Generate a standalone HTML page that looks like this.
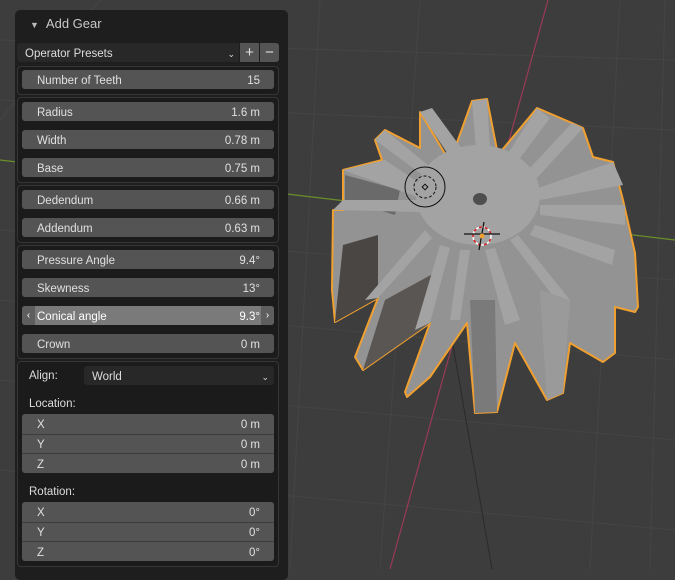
<!DOCTYPE html>
<html><head><meta charset="utf-8"><style>
*{margin:0;padding:0;box-sizing:border-box}
body{width:675px;height:569px;overflow:hidden;background:#3d3d3d;font-family:"Liberation Sans","DejaVu Sans",sans-serif;font-size:11.5px;color:#e0e0e0;position:relative}
svg.bg{position:absolute;left:0;top:0}
.panel{position:absolute;left:15px;top:10px;width:273px;height:570px;background:#1e1e1e;border-radius:5px}
.hdr{position:absolute;left:15px;top:6px;font-size:13px;color:#c8c8c8}
.hdr span{font-size:9px;margin-right:7px;color:#bbb}
.box{position:absolute;left:2px;width:262px;background:#1b1b1b;border:1px solid #363636;border-radius:4px}
.f{position:absolute;left:7px;width:252px;height:19px;background:#545454;border-radius:3px;line-height:19px}
.f .l{position:absolute;left:15px;top:2px}
.f .v{position:absolute;right:14px;top:2px}
.lab{position:absolute;left:14px;color:#ddd}
.dd{position:absolute;height:19px;background:#282828;line-height:19px;padding-left:8px;color:#ddd}
.dd b{font-weight:normal;position:relative;top:2px}
</style></head><body>
<svg class="bg" width="675" height="569" viewBox="0 0 675 569">
<g stroke="#454545" stroke-width="1" fill="none">
<line x1="0" y1="40" x2="675" y2="60"/>
<line x1="0" y1="100" x2="675" y2="130"/>
<line x1="0" y1="230" x2="675" y2="280"/>
<line x1="0" y1="300" x2="675" y2="360"/>
<line x1="0" y1="380" x2="675" y2="440"/>
<line x1="0" y1="470" x2="675" y2="530"/>
<line x1="320" y1="0" x2="290" y2="569"/>
<line x1="420" y1="0" x2="380" y2="569"/>
<line x1="620" y1="0" x2="590" y2="569"/>
<line x1="665" y1="0" x2="650" y2="569"/>
<line x1="100" y1="0" x2="0" y2="120"/>
</g>
<line x1="0" y1="160" x2="675" y2="240" stroke="#6a8f2a" stroke-width="1.2"/>
<line x1="548" y1="0" x2="390" y2="569" stroke="#9a3a55" stroke-width="1.2"/>
<line x1="425" y1="185" x2="492" y2="569" stroke="#2a2a2a" stroke-width="1"/>
<polygon points="420,112 450,162 472,101 487,99 498,155 537,108 572,123 583,128 593,157 613,162 623,200 635,253 638,307 635,312 615,307 615,353 603,362 570,343 563,393 547,400 515,343 497,412 475,413 467,323 430,377 407,397 405,392 430,323 363,370 355,357 378,298 335,322 332,290 333,210 343,210 343,170 382,160 375,140 385,130 420,148" fill="#939393" stroke="#f0a030" stroke-width="2" stroke-linejoin="round"/>
<polygon points="343,245 378,235 378,298 335,322" fill="#4a4644"/>
<polygon points="385,300 440,270 430,323 363,370" fill="#5a5654"/>
<polygon points="345,175 400,190 395,215 345,200" fill="#6a6a6a"/>
<g fill="#a3a3a3">
<ellipse cx="478" cy="195" rx="62" ry="50"/>
<polygon points="420,112 432,108 470,160 455,165"/>
<polygon points="472,101 487,99 490,150 476,150"/>
<polygon points="537,108 550,118 515,165 505,158"/>
<polygon points="572,123 583,128 535,180 528,170"/>
<polygon points="613,162 623,185 540,200 538,188"/>
<polygon points="625,205 625,225 540,215 540,205"/>
<polygon points="615,250 612,265 530,235 535,225"/>
<polygon points="570,300 560,305 510,240 518,235"/>
<polygon points="520,320 505,325 485,250 495,248"/>
<polygon points="460,320 450,320 460,250 470,250"/>
<polygon points="430,323 415,330 440,245 450,248"/>
<polygon points="378,298 365,300 425,230 432,238"/>
<polygon points="333,210 343,200 420,200 420,212"/>
<polygon points="343,170 385,160 430,190 420,198"/>
<polygon points="375,140 385,130 440,175 432,182"/>
</g>
<polygon points="470,300 495,300 497,412 475,413" fill="#7a7a7a"/>
<polygon points="540,290 570,300 563,393 547,400" fill="#9a9a9a"/>
<ellipse cx="480" cy="199" rx="7" ry="6" fill="#4e4e4e"/>
<circle cx="425" cy="187" r="20" fill="none" stroke="#111" stroke-width="1"/>
<circle cx="425" cy="187" r="11" fill="none" stroke="#111" stroke-width="1" stroke-dasharray="3,2"/>
<rect x="423" y="185" width="4" height="4" fill="none" stroke="#111" transform="rotate(45 425 187)"/>
<circle cx="482" cy="236" r="9" fill="none" stroke="#fff" stroke-width="1.5" stroke-dasharray="3,3"/>
<circle cx="482" cy="236" r="9" fill="none" stroke="#d22" stroke-width="1.5" stroke-dasharray="3,3" stroke-dashoffset="3"/>
<path d="M464 234 H500 M484 222 L479 250" stroke="#111" stroke-width="1.2"/>
<circle cx="482" cy="236" r="2.5" fill="#f0a030"/>
</svg>
<div class="panel">
<div class="hdr"><span>▼</span>Add Gear</div>
<div class="dd" style="left:2px;top:33px;width:222px;border-radius:3px 0 0 3px"><b>Operator Presets</b><span style="position:absolute;right:4px;font-size:9px;top:2px">⌄</span></div>
<div style="position:absolute;left:225px;top:33px;width:19px;height:19px;background:#545454;text-align:center;line-height:19px;font-size:15px">+</div>
<div style="position:absolute;left:245px;top:33px;width:19px;height:19px;background:#545454;border-radius:0 3px 3px 0;text-align:center;line-height:19px;font-size:15px">−</div>
<div class="box" style="top:56px;height:29px"></div>
<div class="box" style="top:87px;height:86px"></div>
<div class="box" style="top:175px;height:58px"></div>
<div class="box" style="top:235px;height:114px"></div>
<div class="box" style="top:351px;height:206px"></div>
<div class="f" style="top:60px"><span class="l">Number of Teeth</span><span class="v">15</span></div>
<div class="f" style="top:92px"><span class="l">Radius</span><span class="v">1.6 m</span></div>
<div class="f" style="top:120px"><span class="l">Width</span><span class="v">0.78 m</span></div>
<div class="f" style="top:148px"><span class="l">Base</span><span class="v">0.75 m</span></div>
<div class="f" style="top:180px"><span class="l">Dedendum</span><span class="v">0.66 m</span></div>
<div class="f" style="top:208px"><span class="l">Addendum</span><span class="v">0.63 m</span></div>
<div class="f" style="top:240px"><span class="l">Pressure Angle</span><span class="v">9.4°</span></div>
<div class="f" style="top:268px"><span class="l">Skewness</span><span class="v">13°</span></div>
<div class="f" style="top:296px;background:#7a7a7a;color:#fff"><span style="position:absolute;left:0;width:13px;height:19px;background:#5e5e5e;border-radius:3px 0 0 3px;text-align:center;font-size:10px">‹</span><span class="l">Conical angle</span><span class="v">9.3°</span><span style="position:absolute;right:0;width:13px;height:19px;background:#5e5e5e;border-radius:0 3px 3px 0;text-align:center;font-size:10px">›</span></div>
<div class="f" style="top:324px"><span class="l">Crown</span><span class="v">0 m</span></div>
<div class="lab" style="top:360px">Align:</div>
<div class="dd" style="left:69px;top:356px;width:190px;border-radius:3px"><b>World</b><span style="position:absolute;right:5px;font-size:9px;top:2px">⌄</span></div>
<div class="lab" style="top:388px">Location:</div>
<div class="f" style="top:404px;height:59px;border-radius:3px"></div>
<div class="f" style="top:404px;background:none"><span class="l">X</span><span class="v">0 m</span></div>
<div class="f" style="top:424px;height:1px;background:#3c3c3c"></div>
<div class="f" style="top:424px;background:none"><span class="l">Y</span><span class="v">0 m</span></div>
<div class="f" style="top:443px;height:1px;background:#3c3c3c"></div>
<div class="f" style="top:444px;background:none"><span class="l">Z</span><span class="v">0 m</span></div>
<div class="lab" style="top:476px">Rotation:</div>
<div class="f" style="top:492px;height:59px"></div>
<div class="f" style="top:492px;background:none"><span class="l">X</span><span class="v">0°</span></div>
<div class="f" style="top:512px;height:1px;background:#3c3c3c"></div>
<div class="f" style="top:512px;background:none"><span class="l">Y</span><span class="v">0°</span></div>
<div class="f" style="top:531px;height:1px;background:#3c3c3c"></div>
<div class="f" style="top:532px;background:none"><span class="l">Z</span><span class="v">0°</span></div>
</div>
</body></html>
